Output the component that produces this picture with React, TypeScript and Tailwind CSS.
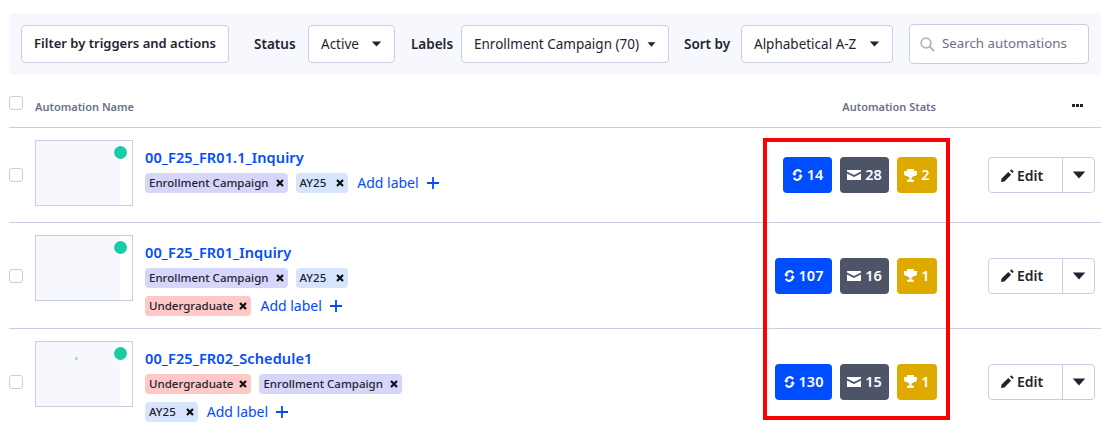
const font = "font-['Noto_Sans','Open_Sans',sans-serif]";

const Caret = ({ big, small }: { big?: boolean; small?: boolean }) => (
  <svg width={big ? 14 : small ? 9 : 11} height={big ? 8 : small ? 5 : 6} viewBox="0 0 12 7" className="shrink-0">
    <path d="M0.5 0.5h11L6 6.5z" fill="#1f2430" />
  </svg>
);

const Select = ({ value, width, small }: { value: string; width: string; small?: boolean }) => (
  <div className={`flex h-[38px] items-center justify-between rounded border border-[#c9cfe0] bg-white pl-3 pr-3 text-[13.5px] text-[#1f2430] ${width}`}>
    <span className="whitespace-nowrap">{value}</span>
    <Caret small={small} />
  </div>
);

const Checkbox = () => <div className="h-[14px] w-[14px] shrink-0 rounded-[3px] border border-[#c9cfe0] bg-white" />;

const colors: Record<string, string> = {
  'Enrollment Campaign': 'bg-[#d6d6fb] gap-[7px]',
  AY25: 'bg-[#d6e4fd] gap-[10px]',
  Undergraduate: 'bg-[#fec8c6] gap-[6px]',
};

const Tag = ({ name }: { name: string }) => (
  <span className={`flex h-5 items-center rounded pl-1 pr-[4px] text-[11.5px] font-medium text-[#1f2430] ${colors[name]}`}>
    {name}
    <svg width="8" height="8" viewBox="0 0 8 8">
      <path d="M1 1l6 6M7 1l-6 6" stroke="#111" strokeWidth="2.200" />
    </svg>
  </span>
);

const AddLabel = () => (
  <span className="ml-[1px] flex items-center gap-2 text-[14px] leading-5 text-[#004cff]">
    Add label
    <svg width="12" height="12" viewBox="0 0 12 12">
      <path d="M6 0v12M0 6h12" stroke="#004cff" strokeWidth="1.800" />
    </svg>
  </span>
);

const SyncIcon = () => (
  <svg width="11" height="14" viewBox="0 0 11 14" fill="none">
    <path d="M2.200 6A3.700 3.700 0 0 1 9.200 4.200" stroke="#fff" strokeWidth="2" />
    <path d="M0 5.400h4.800L2.400 8z" fill="#fff" />
    <path d="M8.800 8A3.700 3.700 0 0 1 1.800 9.800" stroke="#fff" strokeWidth="2" />
    <path d="M11 8.600H6.200L8.600 6z" fill="#fff" />
  </svg>
);

const MailIcon = () => (
  <svg width="14" height="10" viewBox="0 0 14 10">
    <path d="M0 0h14v1.500L7 5 0 1.500zM0 3.400l7 3.500 7-3.500V10H0z" fill="#fff" />
  </svg>
);

const TrophyIcon = () => (
  <svg width="13" height="13" viewBox="0 0 13 13">
    <path d="M3 0h7v2h3v3.500L11.500 7H9.800A4 4 0 0 1 7.500 8.500V10.800H10V12.800H3V10.800H5.500V8.500A4 4 0 0 1 3.200 7H1.500L0 5.500V2h3z" fill="#fff" />
  </svg>
);

const Stat = ({ bg, icon, value, width }: { bg: string; icon: React.ReactNode; value: number; width: string }) => (
  <div className={`flex h-9 items-center justify-center gap-1 rounded text-[14.5px] font-semibold text-white ${bg} ${width}`}>
    {icon}
    {value}
  </div>
);

const EditButton = () => (
  <div className="ml-[51px] flex h-9 w-[107px] shrink-0 rounded border border-[#c9cfe0] bg-white text-[#1f2430]">
    <div className="flex w-[74px] items-center gap-[3px] border-r border-[#c9cfe0] pl-3 text-[14px] font-semibold">
      <svg width="13" height="13" viewBox="0 0 13 13">
        <path d="M0 13l0.600-3.400 6.700-6.700 2.800 2.800-6.700 6.700zM9 1.700l1.400-1.400 2.400 2.400-1.400 1.400z" fill="#1f2430" />
      </svg>
      Edit
    </div>
    <div className="flex flex-1 items-center justify-center">
      <Caret big />
    </div>
  </div>
);

type Row = {
  name: string;
  tags: React.ReactNode;
  runs: number;
  runsWidth: string;
  mails: number;
  wins: number;
  speck?: boolean;
};

const rows: Row[] = [
  {
    name: '00_F25_FR01.1_Inquiry',
    runs: 14,
    runsWidth: 'w-[49px]',
    mails: 28,
    wins: 2,
    tags: (
      <div className="flex items-center gap-2">
        <Tag name="Enrollment Campaign" />
        <Tag name="AY25" />
        <AddLabel />
      </div>
    ),
  },
  {
    name: '00_F25_FR01_Inquiry',
    runs: 107,
    runsWidth: 'w-[57px]',
    mails: 16,
    wins: 1,
    tags: (
      <>
        <div className="flex items-center gap-2">
          <Tag name="Enrollment Campaign" />
          <Tag name="AY25" />
        </div>
        <div className="flex items-center gap-2">
          <Tag name="Undergraduate" />
          <AddLabel />
        </div>
      </>
    ),
  },
  {
    name: '00_F25_FR02_Schedule1',
    runs: 130,
    runsWidth: 'w-[57px]',
    mails: 15,
    wins: 1,
    speck: true,
    tags: (
      <>
        <div className="flex items-center gap-2">
          <Tag name="Undergraduate" />
          <Tag name="Enrollment Campaign" />
        </div>
        <div className="flex items-center gap-2">
          <Tag name="AY25" />
          <AddLabel />
        </div>
      </>
    ),
  },
];

export default function App() {
  return (
    <div className={`relative h-[434px] w-[1108px] overflow-hidden bg-white ${font}`}>
      <div className="pl-[9px] pr-[7px] pt-[13px]">
        <div className="flex h-[62px] items-center rounded bg-[#f6f8fe] pl-3 pr-3">
          <div className="flex h-[38px] w-[208px] items-center justify-center rounded border border-[#c9cfe0] bg-white text-[13px] font-semibold text-[#1f2430]">
            Filter by triggers and actions
          </div>
          <span className="ml-[25px] w-[54px] text-[13.5px] font-semibold text-[#1f2430]">Status</span>
          <Select value="Active" width="w-[87px]" />
          <span className="ml-4 w-[50px] text-[13.5px] font-semibold text-[#1f2430]">Labels</span>
          <Select value="Enrollment Campaign (70)" width="w-[208px]" small />
          <span className="ml-[15px] w-[57px] text-[13.5px] font-semibold text-[#1f2430]">Sort by</span>
          <Select value="Alphabetical A-Z" width="w-[152px]" />
          <div className="ml-4 flex h-10 w-[180px] items-center gap-[7px] rounded border border-[#c9cfe0] bg-white pl-[10px] text-[13.3px] text-[#6b7089]">
            <svg width="15" height="15" viewBox="0 0 15 15" fill="none">
              <circle cx="6" cy="6" r="4.800" stroke="#b5b5b5" strokeWidth="1.800" />
              <path d="M9.500 9.500L14 14" stroke="#b5b5b5" strokeWidth="2" />
            </svg>
            Search automations
          </div>
        </div>
        <div className="flex h-[53px] items-center border-b border-[#c9cfe0] text-[11px] font-semibold text-[#6b7089]">
          <div className="mb-[6px] self-end pb-[11px]">
            <Checkbox />
          </div>
          <span className="ml-3 mt-[12px]">Automation Name</span>
          <span className="ml-auto mr-[136px] mt-[12px]">Automation Stats</span>
          <div className="mr-[18px] mt-[9px] flex gap-[1px]">
            <i className="h-[3px] w-[3px] bg-[#1f2430]" />
            <i className="h-[3px] w-[3px] bg-[#1f2430]" />
            <i className="h-[3px] w-[3px] bg-[#1f2430]" />
          </div>
        </div>
        {rows.map((r) => (
          <div key={r.name} className="flex items-center border-b border-[#c9cfe0] pr-[6px] last:border-b-0">
            <Checkbox />
            <div className="relative mb-4 ml-3 mt-3 h-[66px] w-[98px] shrink-0 self-start border border-[#c9cfe0] bg-white">
              <div className="h-full w-[84px] bg-[#f6f8fe]" />
              <div className="absolute right-[5px] top-[5px] h-[13px] w-[13px] rounded-full bg-[#19cca3] ring-1 ring-white" />
              {r.speck && <div className="absolute left-[39px] top-[15px] h-[3px] w-[3px] rounded-full bg-[#b8c4e8]" />}
            </div>
            <div className="ml-3 flex flex-1 flex-col self-start pb-3 pt-[19px]">
              <div className="text-[14.5px] font-semibold leading-5 tracking-[0.1px] text-[#004cff]">{r.name}</div>
              <div className="mt-[6px] flex flex-col gap-2">{r.tags}</div>
            </div>
            <div className="flex gap-2">
              <Stat bg="bg-[#004cff]" icon={<SyncIcon />} value={r.runs} width={r.runsWidth} />
              <Stat bg="bg-[#4e5468]" icon={<MailIcon />} value={r.mails} width="w-[49px]" />
              <Stat bg="bg-[#deaa00]" icon={<TrophyIcon />} value={r.wins} width="w-10" />
            </div>
            <EditButton />
          </div>
        ))}
      </div>
      <div className="absolute left-[763px] top-[138px] h-[282px] w-[187px] border-4 border-[#ff0000]" />
    </div>
  );
}
